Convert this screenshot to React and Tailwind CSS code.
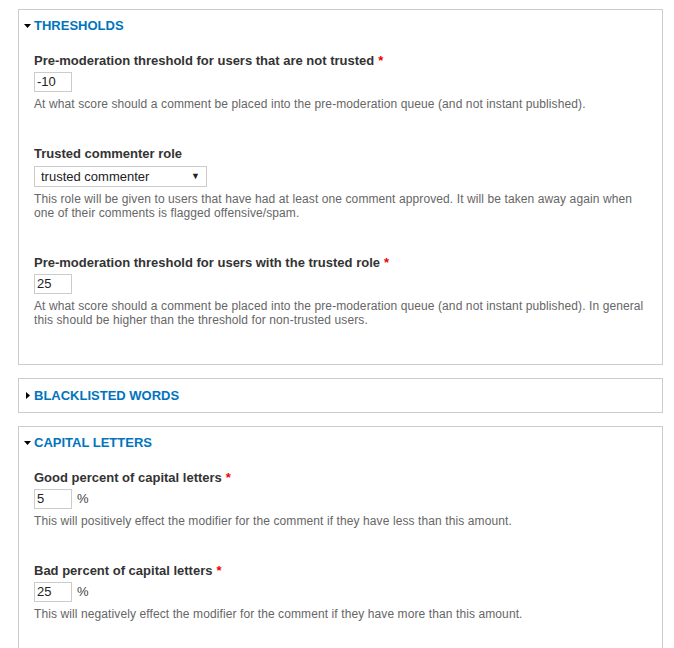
import React from 'react'

const font = { fontFamily: '"Liberation Sans", Arial, sans-serif' }

function Caret({ open }) {
  return open ? (
    <svg width="7" height="4" viewBox="0 0 7 4" className="mr-[3px]">
      <path d="M0 0h7L3.5 4z" fill="#000" />
    </svg>
  ) : (
    <svg width="4" height="7" viewBox="0 0 4 7" className="ml-[2px] mr-[4px]">
      <path d="M0 0v7l4-3.5z" fill="#000" />
    </svg>
  )
}

function Legend({ title, open }) {
  return (
    <div className="flex items-center h-4 -ml-[10px]">
      <Caret open={open} />
      <span className="text-[13px] font-bold leading-4 text-[#0074bd] uppercase">{title}</span>
    </div>
  )
}

function Label({ children, required }) {
  return (
    <div className="text-[13px] font-bold leading-4 text-[#333]">
      {children}
      {required && <span className="text-[#e00] ml-1">*</span>}
    </div>
  )
}

function Desc({ children }) {
  return <div className="text-[12px] leading-[14px] tracking-[0.1px] text-[#666]">{children}</div>
}

function TextField({ value, suffix }) {
  return (
    <div className="flex items-center">
      <div className="w-[38px] h-5 border border-[#ccc] text-[13px] leading-[18px] text-[#222] pl-[2px]">{value}</div>
      {suffix && <span className="ml-[5px] text-[13px] text-[#444]">{suffix}</span>}
    </div>
  )
}

export default function App() {
  return (
    <div className="bg-white min-h-[648px] pt-[9px]" style={font}>
      <div className="ml-[18px] w-[645px] border border-[#ccc] pl-[15px] pr-4 pt-[8px] pb-[37px]">
        <Legend title="Thresholds" open />
        <div className="mt-[19px]">
          <Label required>Pre-moderation threshold for users that are not trusted</Label>
          <div className="mt-[3px]"><TextField value="-10" /></div>
          <div className="mt-[5px]"><Desc>At what score should a comment be placed into the pre-moderation queue (and not instant published).</Desc></div>
        </div>
        <div className="mt-[35px]">
          <Label>Trusted commenter role</Label>
          <div className="mt-1 w-[173px] h-[21px] border border-[#ccc] flex items-center justify-between pl-[6px] pr-[6px] text-[13px] text-[#222]">
            <span>trusted commenter</span>
            <span className="text-[9px] leading-none">▼</span>
          </div>
          <div className="mt-[5px]"><Desc>This role will be given to users that have had at least one comment approved. It will be taken away again when one of their comments is flagged offensive/spam.</Desc></div>
        </div>
        <div className="mt-[35px]">
          <Label required>Pre-moderation threshold for users with the trusted role</Label>
          <div className="mt-[3px]"><TextField value="25" /></div>
          <div className="mt-[5px]"><Desc>At what score should a comment be placed into the pre-moderation queue (and not instant published). In general this should be higher than the threshold for non-trusted users.</Desc></div>
        </div>
      </div>

      <div className="ml-[18px] mt-[13px] w-[645px] h-[35px] border border-[#ccc] pl-[15px] flex items-center">
        <Legend title="Blacklisted words" />
      </div>

      <div className="ml-[18px] mt-[13px] w-[645px] border border-[#ccc] pl-[15px] pr-4 pt-[8px] pb-[37px]">
        <Legend title="Capital letters" open />
        <div className="mt-[19px]">
          <Label required>Good percent of capital letters</Label>
          <div className="mt-[3px]"><TextField value="5" suffix="%" /></div>
          <div className="mt-[5px]"><Desc>This will positively effect the modifier for the comment if they have less than this amount.</Desc></div>
        </div>
        <div className="mt-[35px]">
          <Label required>Bad percent of capital letters</Label>
          <div className="mt-[3px]"><TextField value="25" suffix="%" /></div>
          <div className="mt-[5px]"><Desc>This will negatively effect the modifier for the comment if they have more than this amount.</Desc></div>
        </div>
      </div>
    </div>
  )
}
